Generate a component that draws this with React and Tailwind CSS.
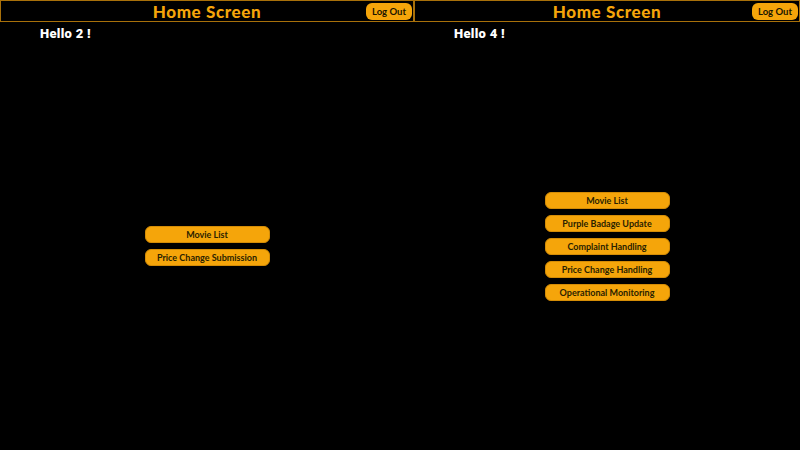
import React from "react";

const Header = () => (
    <div className="relative flex items-center justify-center h-[22px] border border-[#a8700a] bg-black">
        <h1 className="text-[17px] font-black text-[#f5a50a] leading-none tracking-[0.6px]" style={{ fontFamily: '"Lato", sans-serif' }}>
            Home Screen
        </h1>
        <button className="absolute right-[1px] top-[2px] h-[17px] w-[46px] rounded-md bg-[#f5a50a] text-[9.5px] text-[#1a1400] font-bold leading-none" style={{ fontFamily: '"Lato", sans-serif' }}>
            Log Out
        </button>
    </div>
);

const Panel = ({ user, items, className }) => (
    <div className={"flex flex-col h-full " + className}>
        <Header />
        <div className="h-[20px] flex items-center pl-[40px] mt-[2px]">
            <span className="text-white text-[13px] font-black tracking-[0.3px]" style={{ fontFamily: '"Roboto", sans-serif' }}>
                Hello {user} !
            </span>
        </div>
        {/* buttons sit in the middle of what's left */}
        <div className="flex-1 flex flex-col items-center justify-center gap-[6px] pb-[2px]">
            {items.map((label) => (
                <button
                    key={label}
                    className="w-[125px] h-[17px] rounded-md bg-[#f5a50a] border border-[#d48c06] text-[9px] font-bold text-[#2a2200] leading-none"
                    style={{ fontFamily: '"Lato", sans-serif' }}
                >
                    {label}
                </button>
            ))}
        </div>
    </div>
);

export default function App() {
    return (
        <div className="flex w-[800px] h-[450px] bg-black overflow-hidden">
            <Panel className="w-[414px]" user="2" items={["Movie List", "Price Change Submission"]} />
            <Panel
                className="flex-1"
                user="4"
                items={["Movie List", "Purple Badage Update", "Complaint Handling", "Price Change Handling", "Operational Monitoring"]}
            />
        </div>
    );
}
